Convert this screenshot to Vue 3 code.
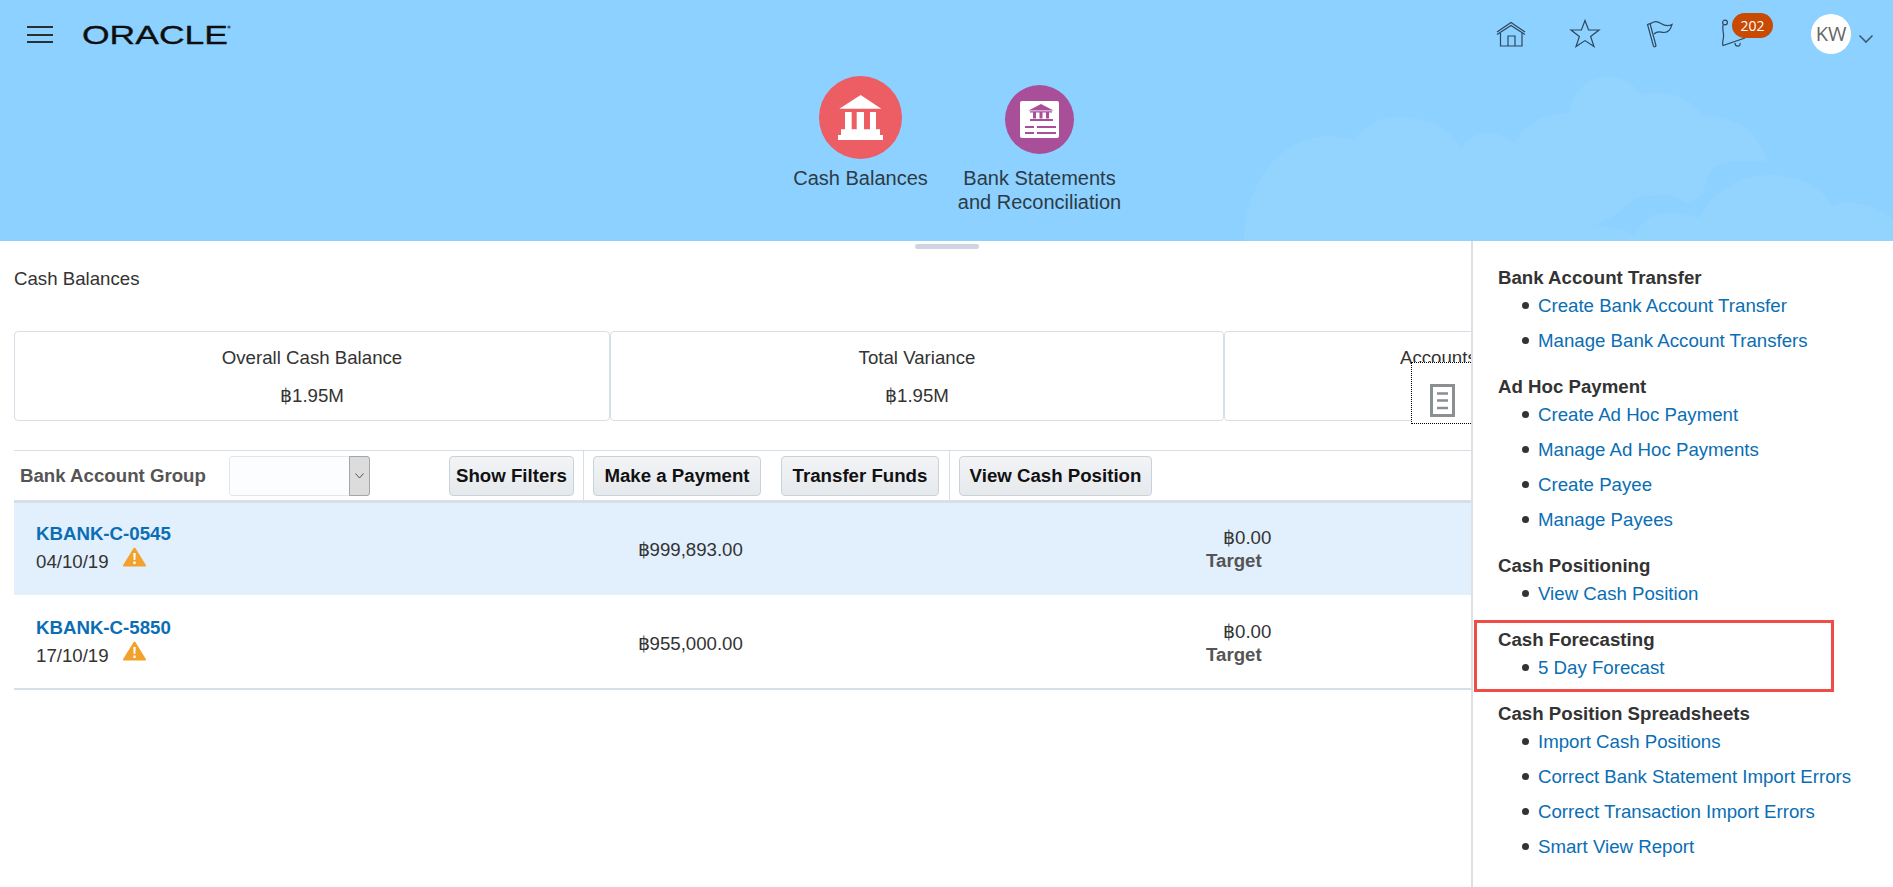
<script setup>
const cards = [
  { title: 'Overall Cash Balance', value: '฿1.95M' },
  { title: 'Total Variance', value: '฿1.95M' },
]
const rows = [
  { name: 'KBANK-C-0545', date: '04/10/19', amount: '฿999,893.00', target: '฿0.00', active: true },
  { name: 'KBANK-C-5850', date: '17/10/19', amount: '฿955,000.00', target: '฿0.00', active: false },
]
const sections = [
  { title: 'Bank Account Transfer', links: ['Create Bank Account Transfer', 'Manage Bank Account Transfers'] },
  { title: 'Ad Hoc Payment', links: ['Create Ad Hoc Payment', 'Manage Ad Hoc Payments', 'Create Payee', 'Manage Payees'] },
  { title: 'Cash Positioning', links: ['View Cash Position'] },
  { title: 'Cash Forecasting', links: ['5 Day Forecast'], marked: true },
  { title: 'Cash Position Spreadsheets', links: ['Import Cash Positions', 'Correct Bank Statement Import Errors', 'Correct Transaction Import Errors', 'Smart View Report'] },
]
</script>

<template>
  <div class="page">
    <header class="header">
      <svg class="clouds" width="1893" height="241" viewBox="0 0 1893 241">
        <path fill="#93d4ff" d="M1244 241C1244 195 1272 138 1328 136C1338 136 1347 138 1355 140C1365 125 1382 116 1399 117C1430 118 1452 130 1461 148C1468 138 1477 133 1487 133C1498 133 1508 137 1514 143C1524 128 1538 116 1553 115L1569 113C1572 92 1588 77 1607 77C1622 77 1634 84 1642 95C1650 92 1658 92 1664 93C1682 95 1695 104 1702 115C1738 116 1760 134 1768 162C1750 162 1735 160 1726 163C1712 166 1708 172 1706 182C1704 192 1702 198 1686 203C1675 196 1668 194 1660 195C1642 196 1640 198 1633 200C1620 212 1607 222 1593 225C1612 226 1624 229 1633 235C1642 222 1652 213 1664 213C1680 213 1690 214 1699 218C1710 196 1735 175 1770 175C1802 176 1824 188 1832 207C1842 202 1848 202 1854 203C1870 204 1882 210 1893 220V241Z" />
      </svg>
      <div class="topbar">
        <button class="menu" aria-label="Menu"><i></i><i></i><i></i></button>
        <svg class="logo" width="160" height="30" viewBox="0 0 160 30">
          <text x="0" y="22" textLength="146" lengthAdjust="spacingAndGlyphs" class="logo-text">ORACLE</text>
          <circle cx="147" cy="5" r="1.6" fill="#4a5560" />
        </svg>
        <div class="actions">
          <svg class="icon home" width="30" height="27" viewBox="0 0 30 27" fill="none" stroke="#2d475c" stroke-width="1.2">
            <path d="M1 11 15 1.500 29 11" />
            <path d="M1 13.500 15 4.500 29 13.500" />
            <path d="M4.500 12V25H26V12M12 25V15H19V25" />
          </svg>
          <svg class="icon star" width="32" height="29" viewBox="0 0 32 29" fill="none" stroke="#2d475c" stroke-width="1.2">
            <path d="M16 1.500 19.600 11H30L21.600 17.500 25 27.500 16 21.600 7 27.500 10.400 17.500 2 11H12.400Z" />
          </svg>
          <svg class="icon flag" width="28" height="28" viewBox="0 0 28 28" fill="none" stroke="#2d475c" stroke-width="1.2">
            <path d="M1.500 4.500 4 3.600 10 25.500C9.600 27 8 27.200 7.400 26Z" />
            <path d="M4.200 4C8 .5 12 1.500 15 3.500 19 6 22 6.500 26 4.500 24.500 9 23 12.500 18 12.500 14.500 12.500 12 10 8 14" />
          </svg>
          <div class="bell-wrap">
            <svg width="36" height="30" viewBox="0 0 36 30" fill="none" stroke="#2d475c" stroke-width="1.2">
              <circle cx="4" cy="3.500" r="2.400" />
              <path d="M2 6C1 12 3 13 2.500 18 2 22 1 25 2 26.500L24 19M14 24C14 28 20 28.500 19 24" />
            </svg>
            <span class="badge">202</span>
          </div>
          <div class="user">
            <span class="avatar">KW</span>
            <svg width="16" height="10" viewBox="0 0 16 10" fill="none" stroke="#3f5c73" stroke-width="1.6"><path d="M1.500 1.500 8 8 14.500 1.500" /></svg>
          </div>
        </div>
      </div>
      <nav class="nav">
        <a class="nav-item">
          <span class="nav-icon">
            <span class="circle red">
              <svg width="45" height="45" viewBox="0 0 45 45" fill="#fff">
                <path d="M22.700 0 43.300 13.700H1.300Z" />
                <path d="M7 17H13.700V34.300H7ZM18.700 17H26V34.300H18.700ZM32 17H38V34.300H32ZM3 34.300H42V40H3ZM0 40H45V45H0Z" />
              </svg>
            </span>
          </span>
          <span class="nav-label">Cash Balances</span>
        </a>
        <a class="nav-item">
          <span class="nav-icon">
            <span class="circle purple">
              <svg width="39" height="37" viewBox="0 0 39 37">
                <rect width="39" height="37" rx="2" fill="#fff" />
                <g fill="#a94f99">
                  <path d="M21 3 33.500 9.500H8.500Z" />
                  <path d="M10 10.300H32V11.500H10ZM13 11.500H16V17.500H13ZM19.500 11.500H22.500V17.500H19.500ZM26 11.500H29V17.500H26ZM10 18H33V20H10Z" />
                  <path d="M5 25H14V27H5ZM17 25H36V27H17ZM5 31H14V33H5ZM17 31H36V33H17Z" />
                </g>
              </svg>
            </span>
          </span>
          <span class="nav-label">Bank Statements<br />and Reconciliation</span>
        </a>
      </nav>
    </header>

    <main class="body">
      <section class="content">
        <div class="handle"></div>
        <h1 class="page-title">Cash Balances</h1>
        <div class="cards">
          <div v-for="c in cards" :key="c.title" class="card">
            <div class="card-title">{{ c.title }}</div>
            <div class="card-value">{{ c.value }}</div>
          </div>
          <div class="card card-cut">
            <div class="card-title">Accounts</div>
          </div>
        </div>
        <button class="float-doc" aria-label="Details">
          <svg width="25" height="33" viewBox="0 0 25 33" fill="none" stroke="#8a8f92">
            <rect x="1.500" y="1.500" width="22" height="30" stroke-width="3" />
            <path d="M7 9.500H18M7 16.500H18M7 24H18" stroke-width="2.500" />
          </svg>
        </button>

        <div class="toolbar">
          <span class="group-label">Bank Account Group</span>
          <span class="select">
            <span class="select-arrow">
              <svg width="9" height="6" viewBox="0 0 9 6" fill="none" stroke="#555" stroke-width="1"><path d="M.500 .500 4.500 5 8.500 .500" /></svg>
            </span>
          </span>
          <button class="btn filters">Show Filters</button>
          <span class="sep"></span>
          <button class="btn pay">Make a Payment</button>
          <button class="btn transfer">Transfer Funds</button>
          <span class="sep sep2"></span>
          <button class="btn view">View Cash Position</button>
        </div>

        <div v-for="r in rows" :key="r.name" class="row" :class="{ active: r.active }">
          <div class="cell-name">
            <a class="acct">{{ r.name }}</a>
            <div class="date">
              {{ r.date }}
              <svg class="warn" width="23" height="20" viewBox="0 0 23 20">
                <path d="M11.500 1.500 22 18.500H1Z" fill="#f2a22c" stroke="#f2a22c" stroke-width="2" stroke-linejoin="round" />
                <path d="M10.300 6H12.700L12.300 13H10.700ZM10.300 14.500H12.700V17H10.300Z" fill="#fff" />
              </svg>
            </div>
          </div>
          <div class="cell-amount">{{ r.amount }}</div>
          <div class="cell-target">
            <div class="target-value">{{ r.target }}</div>
            <div class="target-label">Target</div>
          </div>
        </div>
      </section>

      <aside class="panel">
        <div v-for="s in sections" :key="s.title" class="section">
          <h3 class="section-title">{{ s.title }}</h3>
          <ul class="links">
            <li v-for="l in s.links" :key="l"><a>{{ l }}</a></li>
          </ul>
          <div v-if="s.marked" class="marker"></div>
        </div>
      </aside>
    </main>
  </div>
</template>

<style>
html, body { margin: 0; background: #fff; overflow: hidden; }
</style>

<style scoped>
.page { width: 1893px; height: 887px; overflow: hidden; font-family: "Liberation Sans", Arial, sans-serif; font-size: 18.67px; color: #333; }
.header { position: relative; height: 241px; background: #8cd1ff; overflow: hidden; }
.clouds { position: absolute; left: 0; top: 0; }
.topbar { position: relative; height: 76px; display: flex; padding-left: 27px; box-sizing: border-box; }
.menu { border: 0; background: none; padding: 0; width: 26px; height: 17px; margin-top: 26px; display: flex; flex-direction: column; justify-content: space-between; }
.menu i { display: block; height: 2px; background: #2b2f33; }
.logo { margin: 22px 0 0 29px; }
.logo-text { font: 400 25px "Liberation Sans", sans-serif; fill: #0e0e0e; stroke: #0e0e0e; stroke-width: .3px; }
.actions { margin-left: auto; display: flex; align-items: flex-start; }
.icon { display: block; }
.home { margin-top: 21px; }
.star { margin: 19px 0 0 43px; }
.flag { margin: 20px 0 0 45px; }
.bell-wrap { position: relative; width: 36px; height: 30px; margin: 19px 0 0 47px; }
.badge { position: absolute; left: 11px; top: -6px; width: 41px; height: 25px; border-radius: 13px; background: #c94a03; color: #fff; font: 400 14px/25px "Open Sans", sans-serif; text-align: center; }
.user { display: flex; align-items: center; margin: 14px 19px 0 54px; }
.avatar { width: 40px; height: 40px; border-radius: 50%; background: #fff; color: #666; font: 400 20px/40px "Open Sans", sans-serif; text-align: center; }
.user svg { margin: 9px 0 0 7px; }
.nav { position: relative; display: flex; justify-content: center; padding-left: 7px; }
.nav-item { width: 179px; display: flex; flex-direction: column; align-items: center; }
.nav-icon { height: 83px; display: flex; align-items: center; justify-content: center; }
.circle { display: flex; align-items: center; justify-content: center; border-radius: 50%; }
.circle.red { width: 83px; height: 83px; background: #ec5d64; }
.circle.purple { width: 69px; height: 69px; margin-top: 3px; background: #a94f99; }
.nav-label { margin-top: 7px; font-size: 20px; line-height: 24px; color: #2d3b45; text-align: center; white-space: nowrap; }

.body { display: flex; height: 646px; }
.content { position: relative; flex: 1; min-width: 0; padding-left: 14px; overflow: hidden; }
.handle { position: absolute; left: 915px; top: 3px; width: 64px; height: 5px; border-radius: 3px; background: #cfd3e2; }
.page-title { margin: 0; padding-top: 27px; font-size: 18.67px; line-height: 21px; font-weight: 400; color: #333; }
.cards { display: flex; margin-top: 42px; width: 1830px; }
.card { width: 596px; height: 90px; box-sizing: border-box; border: 1px solid #d6dfe6; border-radius: 4px; text-align: center; }
.card + .card { width: 614px; }
.card-cut { text-align: left; padding-left: 175px; }
.card-title { margin-top: 15px; line-height: 22px; color: #333; }
.card-value { margin-top: 16px; line-height: 22px; color: #333; }
.float-doc { position: absolute; left: 1411px; top: 121px; width: 62px; height: 62px; box-sizing: border-box; padding: 14px 0 0 18px; background: #fff; border: 1px dotted #000; display: block; text-align: left; }
.float-doc svg { display: block; }

.toolbar { position: relative; z-index: 1; display: flex; align-items: center; height: 49px; margin: 29px 0 -2px; border-top: 1px solid #d6dfe6; border-bottom: 3px solid #d6dfe6; }
.group-label { margin-left: 6px; font-weight: 700; color: #555; width: 209px; white-space: nowrap; }
.select { position: relative; width: 141px; height: 40px; box-sizing: border-box; border: 1px solid #e2e6ea; border-radius: 3px; background: #fcfdff; }
.select-arrow { position: absolute; right: -1px; top: -1px; bottom: -1px; width: 21px; box-sizing: border-box; border: 1px solid #a3a7aa; border-radius: 0 3px 3px 0; background: #dcdcdc; display: flex; align-items: center; justify-content: center; }
.btn { height: 40px; box-sizing: border-box; padding: 0; border: 1px solid #c9d2da; border-radius: 4px; background: linear-gradient(#f2f4f6, #e6e9ec); font: 700 18.67px "Liberation Sans", sans-serif; color: #111; white-space: nowrap; }
.filters { width: 125px; margin-left: 79px; }
.sep { align-self: stretch; width: 1px; background: #d6dfe6; margin-left: 9px; }
.pay { width: 168px; margin-left: 9px; }
.transfer { width: 158px; margin-left: 20px; }
.sep2 { margin-left: 10px; }
.view { width: 193px; margin-left: 9px; }

.row { display: grid; grid-template-columns: 623.5px 567.5px 1fr; height: 93px; align-items: start; }
.row.active { height: 94px; background: #e2effd; }
.row:last-child { border-bottom: 2px solid #d6dfe6; }
.cell-name { padding: 22px 0 0 22px; }
.acct { display: block; line-height: 22px; font-weight: 700; color: #0a6eb4; white-space: nowrap; }
.date { display: flex; align-items: center; line-height: 22px; color: #333; margin-top: 6px; }
.warn { margin: -10px 0 0 14px; }
.cell-amount { padding-top: 38px; line-height: 22px; color: #333; }
.cell-target { padding-top: 26px; line-height: 22px; margin-left: 1px; }
.target-value { padding-left: 17px; color: #333; }
.target-label { font-weight: 700; color: #555; margin-top: 1px; }

.panel { width: 422px; box-sizing: border-box; flex: none; padding: 25.500px 0 0 25px; border-left: 2px solid #dde0e5; background: #fff; position: relative; }
.section { position: relative; margin-bottom: 18px; }
.section-title { margin: 0; font-size: 18.67px; line-height: 21px; font-weight: 700; color: #333; }
.links { margin: 0; padding: 0 0 0 40px; list-style: none; }
.links li { position: relative; height: 35px; line-height: 35px; color: #333; }
.links li::before { content: ""; position: absolute; left: -16.500px; top: 14px; width: 7px; height: 7px; border-radius: 50%; background: #333; }
.links a { color: #0a6eb4; }
.marker { position: absolute; left: -24px; top: -8.500px; width: 360px; height: 72px; box-sizing: border-box; border: 3px solid #ef4b47; }
</style>
